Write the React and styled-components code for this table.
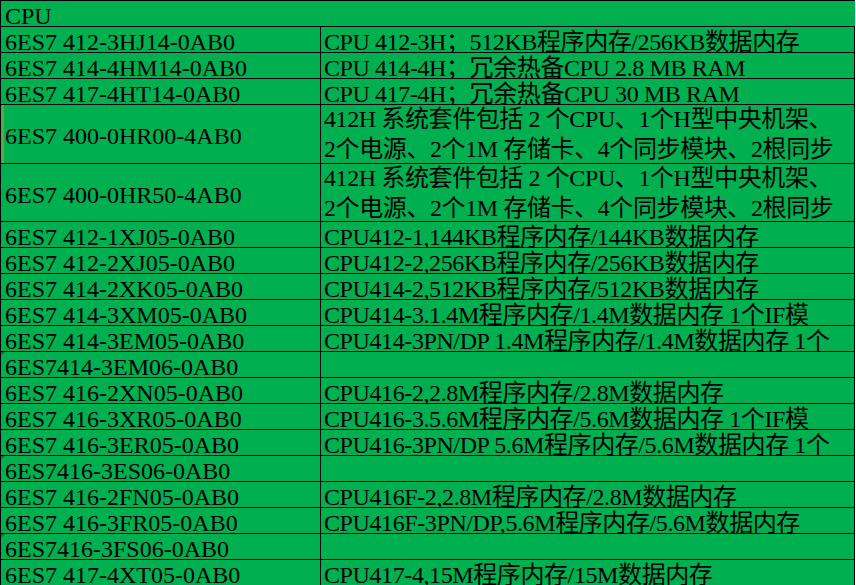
import React from 'react';
import styled, { createGlobalStyle } from 'styled-components';

const GlobalStyle = createGlobalStyle`
  html, body {
    margin: 0;
    padding: 0;
    background: #ffffff;
    overflow: hidden;
  }
  * {
    box-sizing: border-box;
  }
`;

const Sheet = styled.div`
  width: 855px;
  background: #00b050;
  border-left: 1px solid #000;
  font-family: 'Liberation Serif', 'Noto Sans CJK SC', serif;
  font-size: 24px;
  color: #000;
`;

const HeaderRow = styled.div`
  height: 27px;
  border-top: 1px solid #000;
  border-bottom: 1px solid #000;
  display: flex;
  align-items: flex-end;
  padding-left: 4px;
  line-height: 26px;
  overflow: hidden;

  span {
    margin-bottom: -3px;
  }
`;

const Row = styled.div`
  display: grid;
  grid-template-columns: 320px 534px;
  height: ${({ h }) => h}px;
`;

const Cell = styled.div`
  position: relative;
  border-right: 1px solid #000;
  border-bottom: 1px solid #000;
  padding-left: ${({ wide }) => (wide ? 3 : 4)}px;
  padding-top: ${({ centered }) => (centered ? 4 : 0)}px;
  overflow: hidden;
  white-space: nowrap;
  letter-spacing: ${({ wide }) => (wide ? '-0.4px' : 'normal')};
  display: flex;
  flex-direction: column;
  justify-content: ${({ centered, multi }) => (centered || multi ? 'center' : 'flex-end')};
  line-height: ${({ multi }) => (multi ? 30 : 26)}px;
  box-shadow: ${({ marked }) => (marked ? 'inset 3px 0 0 #5aa83e' : 'none')};

  &::before {
    content: '';
    display: ${({ flag }) => (flag ? 'block' : 'none')};
    position: absolute;
    left: 0;
    top: 0;
    border-top: 4px solid #1f6f2a;
    border-right: 4px solid transparent;
  }
`;

const Text = styled.span`
  display: block;
  margin-bottom: ${({ lifted }) => (lifted ? 0 : -3)}px;
`;

const rows = [
  { code: '6ES7 412-3HJ14-0AB0', desc: ['CPU 412-3H；512KB程序内存/256KB数据内存'] },
  { code: '6ES7 414-4HM14-0AB0', desc: ['CPU 414-4H；冗余热备CPU 2.8 MB RAM'] },
  { code: '6ES7 417-4HT14-0AB0', desc: ['CPU 417-4H；冗余热备CPU 30 MB RAM'] },
  {
    code: '6ES7 400-0HR00-4AB0',
    desc: ['412H 系统套件包括 2 个CPU、1个H型中央机架、', '2个电源、2个1M 存储卡、4个同步模块、2根同步'],
    h: 59,
    marked: true,
  },
  {
    code: '6ES7 400-0HR50-4AB0',
    desc: ['412H 系统套件包括 2 个CPU、1个H型中央机架、', '2个电源、2个1M 存储卡、4个同步模块、2根同步'],
    h: 58,
  },
  { code: '6ES7 412-1XJ05-0AB0', desc: ['CPU412-1,144KB程序内存/144KB数据内存'] },
  { code: '6ES7 412-2XJ05-0AB0', desc: ['CPU412-2,256KB程序内存/256KB数据内存'] },
  { code: '6ES7 414-2XK05-0AB0', desc: ['CPU414-2,512KB程序内存/512KB数据内存'] },
  { code: '6ES7 414-3XM05-0AB0', desc: ['CPU414-3.1.4M程序内存/1.4M数据内存 1个IF模'] },
  { code: '6ES7 414-3EM05-0AB0', desc: ['CPU414-3PN/DP 1.4M程序内存/1.4M数据内存 1个'] },
  { code: '6ES7414-3EM06-0AB0', desc: [], flag: true },
  { code: '6ES7 416-2XN05-0AB0', desc: ['CPU416-2,2.8M程序内存/2.8M数据内存'] },
  { code: '6ES7 416-3XR05-0AB0', desc: ['CPU416-3.5.6M程序内存/5.6M数据内存 1个IF模'] },
  { code: '6ES7 416-3ER05-0AB0', desc: ['CPU416-3PN/DP 5.6M程序内存/5.6M数据内存 1个'] },
  { code: '6ES7416-3ES06-0AB0', desc: [], flag: true },
  { code: '6ES7 416-2FN05-0AB0', desc: ['CPU416F-2,2.8M程序内存/2.8M数据内存'] },
  { code: '6ES7 416-3FR05-0AB0', desc: ['CPU416F-3PN/DP,5.6M程序内存/5.6M数据内存'] },
  { code: '6ES7416-3FS06-0AB0', desc: [], flag: true },
  { code: '6ES7 417-4XT05-0AB0', desc: ['CPU417-4,15M程序内存/15M数据内存'] },
];

export default function App() {
  return (
    <>
      <GlobalStyle />
      <Sheet>
        <HeaderRow>
          <span>CPU</span>
        </HeaderRow>
        {rows.map((r) => {
          const multi = r.desc.length > 1;
          return (
            <Row key={r.code} h={r.h || 26}>
              <Cell marked={r.marked} flag={r.flag} centered={multi}>
                <Text lifted={multi}>{r.code}</Text>
              </Cell>
              <Cell wide multi={multi}>
                {r.desc.map((line) => (
                  <Text key={line} lifted={multi}>
                    {line}
                  </Text>
                ))}
              </Cell>
            </Row>
          );
        })}
      </Sheet>
    </>
  );
}
